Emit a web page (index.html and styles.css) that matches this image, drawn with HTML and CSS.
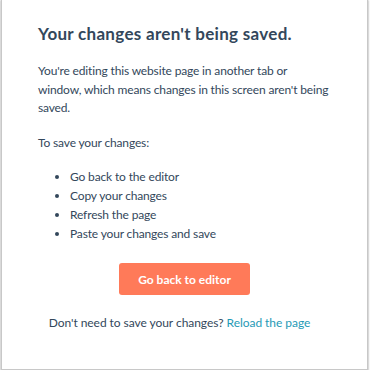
FILE: index.html
```html
<!DOCTYPE html>
<html>
<head>
<meta charset="utf-8">
<link rel="stylesheet" href="styles.css">
</head>
<body>
<div class="card">
  <h1 class="title">Your changes aren't being saved.</h1>
  <p class="text">You're editing this website page in another tab or window, which means changes in this screen aren't being saved.</p>
  <p class="text intro">To save your changes:</p>
  <ul class="steps">
    <li>Go back to the editor</li>
    <li>Copy your changes</li>
    <li>Refresh the page</li>
    <li>Paste your changes and save</li>
  </ul>
  <div class="actions">
    <button class="btn">Go back to editor</button>
  </div>
  <p class="footer">Don't need to save your changes? <a class="link" href="#">Reload the page</a></p>
</div>
</body>
</html>
```
FILE: styles.css
```css
html, body {
  margin: 0;
  padding: 0;
  background: #fff;
}
body {
  font-family: Lato, "Noto Sans", sans-serif;
  color: #33475b;
}
.card {
  box-sizing: border-box;
  margin: -1px 0 0 1px;
  width: 367px;
  height: 371px;
  background: #fff;
  border: 1px solid #c8c8c8;
  box-shadow: 0 1px 2px rgba(0,0,0,0.45);
  padding: 22px 36px 0 36px;
}
.title {
  margin: 0;
  font-size: 17px;
  font-weight: 700;
  line-height: 24px;
  letter-spacing: 0.3px;
}
.text {
  margin: 16px 0 0 0;
  font-size: 12px;
  letter-spacing: -0.15px;
  line-height: 18.5px;
}
.intro {
  margin-top: 16px;
}
.steps {
  margin: 15px 0 0 0;
  padding-left: 32px;
  font-size: 12px;
  letter-spacing: -0.15px;
  line-height: 19px;
}
.actions {
  display: flex;
  justify-content: center;
  margin-top: 20px;
}
.btn {
  width: 131px;
  height: 32px;
  border: none;
  border-radius: 3px;
  background: #ff7a59;
  color: #fff;
  font-family: inherit;
  font-size: 12px;
  font-weight: 700;
}
.footer {
  margin: 18px 0 0 0;
  padding-right: 10px;
  text-align: center;
  font-size: 12px;
  letter-spacing: -0.05px;
  line-height: 19px;
}
.link {
  color: #1f9ab6;
  text-decoration: none;
}
```
